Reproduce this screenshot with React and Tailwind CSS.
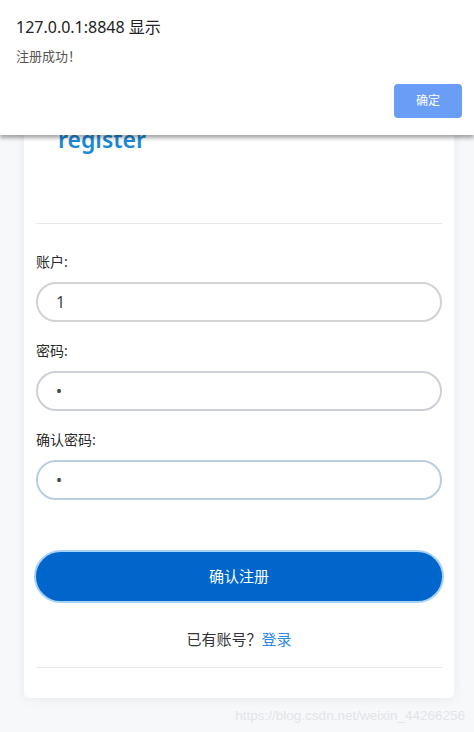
export default function App() {
  const font = { fontFamily: '"Noto Sans", "Noto Sans CJK SC", sans-serif' };
  return (
    <div className="relative w-[474px] h-[732px] overflow-hidden bg-[#f7f8fa]" style={font}>
      <div className="pl-[24px] pr-[20px] pt-[60px]">
        <div className="bg-white rounded-[6px] shadow-[0_2px_12px_rgba(0,0,0,0.06)] px-[12px] pt-[64px] pb-[30px]">
          <div className="pl-[22px] h-[30px] leading-[30px] text-[23px] font-semibold text-[#1a8ad6]">register</div>
          <div className="mt-[69px] border-t border-[#e8e8e8]" />
          <div className="pt-[28px]">
            <div className="h-[20px] leading-[20px] text-[14px] text-[#2b2b2b]">账户:</div>
            <div className="mt-[10px] h-[40px] rounded-full border-2 border-[#d2d2d2] flex items-center pl-[18px] text-[16px] text-[#444]">1</div>
            <div className="mt-[19px] h-[20px] leading-[20px] text-[14px] text-[#2b2b2b]">密码:</div>
            <div className="mt-[10px] h-[40px] rounded-full border-2 border-[#ccd0d6] flex items-center pl-[18px] text-[16px] text-[#444]">•</div>
            <div className="mt-[19px] h-[20px] leading-[20px] text-[14px] text-[#2b2b2b]">确认密码:</div>
            <div className="mt-[10px] h-[40px] rounded-full border-2 border-[#bccde0] flex items-center pl-[18px] text-[16px] text-[#444]">•</div>
          </div>
          <div className="mt-[52px] h-[49px] rounded-full bg-[#0066cc] ring-2 ring-[#a9d1f7] flex items-center justify-center text-[15px] text-white">确认注册</div>
          <div className="mt-[27px] h-[22px] leading-[22px] text-center text-[15px] text-[#333]">
            已有账号？<span className="text-[#2f86e6]">登录</span>
          </div>
          <div className="mt-[17px] border-t border-[#e8e8e8]" />
        </div>
      </div>
      <div className="absolute right-[9px] bottom-[6px] text-[13.5px] text-[#e2e4e8]" style={{ fontFamily: '"Liberation Sans", Arial, sans-serif' }}>
        https://blog.csdn.net/weixin_44266256
      </div>
      <div className="absolute top-0 left-0 right-0 h-[135px] bg-white shadow-[0_3px_4px_rgba(0,0,0,0.35)]">
        <div className="absolute left-[16px] top-[16px] h-[22px] leading-[22px] text-[16px] text-[#202124]">127.0.0.1:8848 显示</div>
        <div className="absolute left-[16px] top-[47px] h-[18px] leading-[18px] text-[13px] text-[#555]">注册成功！</div>
        <div className="absolute left-[394px] top-[84px] w-[68px] h-[34px] rounded-[4px] bg-[#6a9ef6] flex items-center justify-center text-[12px] text-white">确定</div>
      </div>
    </div>
  );
}
